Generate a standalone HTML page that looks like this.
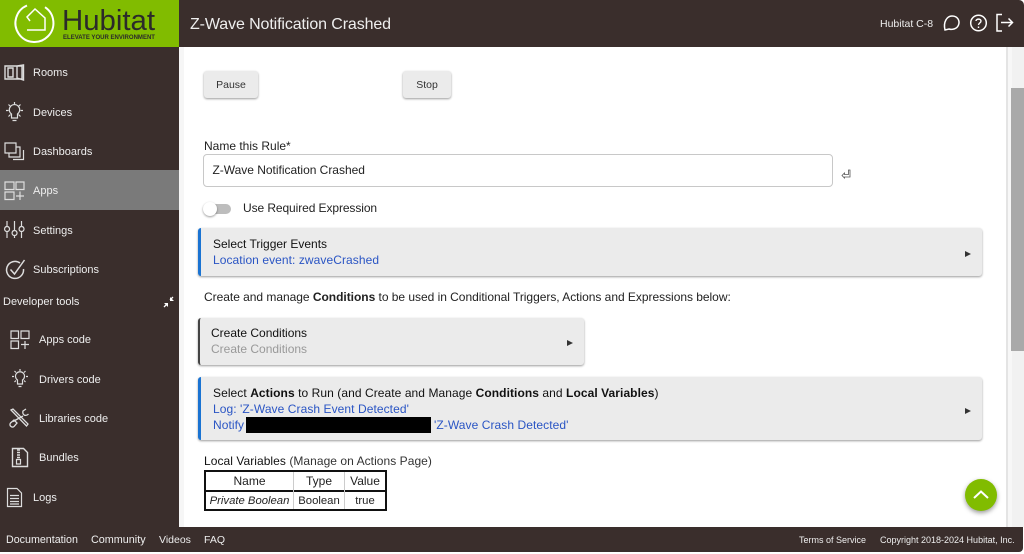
<!DOCTYPE html>
<html><head><meta charset="utf-8">
<style>
html,body{margin:0;padding:0;background:#fff}
body{width:1024px;height:554px;overflow:hidden;position:relative;font-family:"Liberation Sans",sans-serif;color:#222}
.a{position:absolute;white-space:nowrap}
.nav{position:absolute;color:#eee;font-size:11px;white-space:nowrap;line-height:14px}
.card{position:absolute;background:#ebebeb;border-radius:3px;box-shadow:0 1px 2px rgba(0,0,0,.4);box-sizing:border-box}
.t{position:absolute;font-size:12px;white-space:nowrap;line-height:16px}
.blue{color:#2a55c4;letter-spacing:.07px}
.btn{position:absolute;background:#ebebeb;border-radius:3px;box-shadow:0 1px 2px rgba(0,0,0,.4);font-size:10.5px;color:#333;text-align:center;top:71px;height:27px;line-height:29px}
.ar{position:absolute;width:0;height:0;border-left:6px solid #333;border-top:3px solid transparent;border-bottom:3px solid transparent}
svg{position:absolute;overflow:visible}
.i{fill:none;stroke:#ddd;stroke-width:1.2}
</style></head><body>
<!-- left and right gutters -->
<div class="a" style="left:179px;top:47px;width:5px;height:480px;background:#f6f6f6"></div>
<div class="a" style="left:1006px;top:47px;width:2px;height:480px;background:#e4e4e4"></div>
<div class="a" style="left:1008px;top:47px;width:4px;height:480px;background:#f7f7f7"></div>
<div class="a" style="left:1012px;top:47px;width:12px;height:480px;background:#f1f1f1"></div>
<div class="a" style="left:1011px;top:88px;width:13px;height:263px;background:#a9a9a9"></div>
<!-- header -->
<div class="a" style="left:0;top:0;width:1024px;height:47px;background:#3a2e2c;border-top-right-radius:5px"></div>
<div class="a" style="left:0;top:0;width:179px;height:47px;background:#81bc00"></div>
<svg style="left:0;top:0" width="179" height="47">
<path d="M27 5.500A19 19 0 1 0 45 7.200" fill="none" stroke="#fff" stroke-width="2"/>
<path d="M30 21L27 17L35 9L45 18V30H27" fill="none" stroke="#fff" stroke-width="1.500"/>
<text x="62" y="30" font-family="Liberation Sans" font-size="29" fill="#2b2a2a" textLength="93" lengthAdjust="spacingAndGlyphs">Hubitat</text>
<text x="63" y="39" font-family="Liberation Sans" font-size="6.500" font-weight="bold" fill="#2b2a2a" textLength="92" lengthAdjust="spacingAndGlyphs">ELEVATE YOUR ENVIRONMENT</text>
</svg>
<div class="a" style="left:190px;top:15px;font-size:16px;line-height:20px;color:#eee;letter-spacing:-.11px">Z-Wave Notification Crashed</div>
<div class="a" style="left:880px;top:17px;font-size:10.500px;line-height:14px;color:#eee">Hubitat C-8</div>
<svg style="left:940px;top:10px" width="84" height="30" fill="none" stroke="#fff" stroke-width="1.500">
<path d="M5 20C3 12 7 6 12 6C18 6 20 11 18.500 15C17 19 12 20 9 19L5 20Z"/>
<circle cx="38.500" cy="13" r="7.800"/>
<path d="M36 11C36 8.500 41 8.500 41 11C41 13 38.500 13 38.500 15M38.500 16.500V18" stroke-width="1.400"/>
<path d="M62 4.500H57V21H62M61 12.500H72.500M68.500 8.500L72.500 12.500L68.500 16.500"/>
</svg>
<!-- sidebar -->
<div class="a" style="left:0;top:47px;width:179px;height:480px;background:#3a2e2c"></div>
<div class="a" style="left:0;top:170px;width:179px;height:40px;background:#7a7a7a"></div>
<svg style="left:0;top:0" width="180" height="527">
<g class="i">
<!-- rooms -->
<path d="M5 66H22V79H5ZM8 68H13V77H8ZM17 66L23.500 65V80L17 78Z" stroke-width="1.400"/>
<!-- devices -->
<path d="M11.500 114A5.200 5.200 0 1 1 17.500 114V118H11.500ZM12.500 120.500H16.500M14.500 102V104.500M6 110.500H8.500M20.500 110.500H23M8.500 104.500L10.500 106.500M20.500 104.500L18.500 106.500M8.500 116.500L10.500 114.500M20.500 116.500L18.500 114.500"/>
<!-- dashboards -->
<path d="M5 143H16V153H5ZM16 147H20V157H9V153M23.500 150V159.500H13"/>
<!-- apps -->
<path d="M5 182H14V189.500H5ZM16 182H24V189.500H16ZM5 192H14V199.500H5ZM16 196H24M20 191.500V200"/>
<!-- settings -->
<path d="M7 221V226.500M7 231.500V238M14.500 221V230.500M14.500 235.500V238M21.500 221V226.500M21.500 231.500V238M7 226.500A2.500 2.500 0 1 0 7.100 226.500M14.500 230.500A2.500 2.500 0 1 0 14.600 230.500M21.500 226.500A2.500 2.500 0 1 0 21.600 226.500"/>
<!-- subscriptions -->
<path d="M20 263A8.500 8.500 0 1 0 23.500 269M10.500 269.500L14.500 274L24.500 260" stroke-width="1.500"/>
<!-- apps code -->
<path d="M11 331H18.500V338.500H11ZM21 331H29V338.500H21ZM11 341H18.500V348.500H11ZM21 344.500H29M25 341V349"/>
<!-- drivers code -->
<path d="M17.500 380A4.500 4.500 0 1 1 22.500 380V384H17.500ZM18.500 386.500H21.500M20 369V371M12 376.500H14M26 376.500H28M14.500 371L16 372.500M25.500 371L24 372.500M14.500 382L16 380.500M25.500 382L24 380.500"/>
<!-- libraries -->
<path d="M11 410L13 409L28 424L26.500 426ZM23 416L13 421.500M24 415A4 4 0 0 1 23 411L26 409M24 415A4 4 0 0 0 28.500 414M14 420L17 423L14 426.500A2.500 2.500 0 0 1 10.500 423Z" stroke-width="1.300"/>
<!-- bundles -->
<path d="M12.500 448.500H23.500L27.500 452.500V466.500H12.500Z" stroke-width="1.400"/>
<path d="M17 450H20M17 452.500H20M17 455H20M17 457.500H20" stroke-width="1.500"/>
<path d="M16.500 459.500H20.500V464H16.500Z"/>
<!-- logs -->
<path d="M7.500 488.500H17L21.500 493V506.500H7.500ZM10 495.500H19M10 498.500H19M10 501.500H19M10 504H19"/>
</g></svg>
<div class="nav" style="left:33px;top:66px">Rooms</div>
<div class="nav" style="left:33px;top:106px">Devices</div>
<div class="nav" style="left:33px;top:145px">Dashboards</div>
<div class="nav" style="left:33px;top:184px">Apps</div>
<div class="nav" style="left:33px;top:224px">Settings</div>
<div class="nav" style="left:33px;top:263px">Subscriptions</div>
<div class="nav" style="left:3px;top:295px">Developer tools</div>
<svg style="left:163px;top:296px" width="12" height="12" fill="none" stroke="#fff" stroke-width="1.300"><path d="M1 11L4.500 7.500M10 1L7 4"/><path d="M1 7H5V11Z M7 1V5H11Z" fill="#fff" stroke="none"/></svg>
<div class="nav" style="left:39px;top:333px">Apps code</div>
<div class="nav" style="left:39px;top:373px">Drivers code</div>
<div class="nav" style="left:39px;top:412px">Libraries code</div>
<div class="nav" style="left:39px;top:451px">Bundles</div>
<div class="nav" style="left:33px;top:491px">Logs</div>
<!-- content -->
<div class="btn" style="left:204px;width:54px">Pause</div>
<div class="btn" style="left:403px;width:48px">Stop</div>
<div class="t" style="left:204px;top:138px">Name this Rule*</div>
<div class="a" style="left:203px;top:154px;width:630px;height:33px;box-sizing:border-box;border:1px solid #c8c8c8;border-radius:4px;font-size:12px;line-height:30px;padding-left:8.500px;letter-spacing:-.02px">Z-Wave Notification Crashed</div>
<svg style="left:841px;top:169px" width="10" height="10" fill="none" stroke="#555" stroke-width=".8"><path d="M1 6.500L3.500 4V5.500H7.500V1H9V8H3.500V9Z"/></svg>
<div class="a" style="left:204px;top:204px;width:27px;height:10px;border-radius:5px;background:#bdbdbd"></div>
<div class="a" style="left:203px;top:202px;width:14px;height:14px;border-radius:50%;background:#fff;box-shadow:0 1px 2px rgba(0,0,0,.4)"></div>
<div class="t" style="left:243px;top:200px;letter-spacing:-.09px">Use Required Expression</div>

<div class="card" style="left:198px;top:228px;width:784px;height:48px;border-left:3px solid #1a73d2"></div>
<div class="t" style="left:213px;top:236px;color:#111">Select Trigger Events</div>
<div class="t blue" style="left:213px;top:252px">Location event: zwaveCrashed</div>
<div class="ar" style="left:965px;top:251px"></div>

<div class="t" style="left:204px;top:289px;letter-spacing:-.03px">Create and manage <b>Conditions</b> to be used in Conditional Triggers, Actions and Expressions below:</div>

<div class="card" style="left:198px;top:318px;width:386px;height:47px;border-left:2px solid #444"></div>
<div class="t" style="left:211px;top:325px;color:#111">Create Conditions</div>
<div class="t" style="left:211px;top:341px;color:#999">Create Conditions</div>
<div class="ar" style="left:567px;top:340px"></div>

<div class="card" style="left:198px;top:377px;width:784px;height:63px;border-left:3px solid #1a73d2"></div>
<div class="t" style="left:213px;top:385px;color:#111;letter-spacing:.07px">Select <b>Actions</b> to Run (and Create and Manage <b>Conditions</b> and <b>Local Variables</b>)</div>
<div class="t blue" style="left:213px;top:401px">Log: 'Z-Wave Crash Event Detected'</div>
<div class="t blue" style="left:213px;top:417px">Notify</div>
<div class="a" style="left:246px;top:417px;width:185px;height:16px;background:#000"></div>
<div class="t blue" style="left:434px;top:417px">'Z-Wave Crash Detected'</div>
<div class="ar" style="left:965px;top:408px"></div>

<div class="t" style="left:204px;top:453px;letter-spacing:.05px"><span style="color:#111">Local Variables</span> <span style="color:#333">(Manage on Actions Page)</span></div>
<div class="a" style="left:204px;top:470px;width:183px;height:41px;box-sizing:border-box;border:2px solid #111"></div>
<div class="a" style="left:204px;top:490px;width:183px;height:2px;background:#111"></div>
<div class="a" style="left:293px;top:472px;width:1px;height:37px;background:#ccc"></div>
<div class="a" style="left:344px;top:472px;width:1px;height:37px;background:#ccc"></div>
<div class="t" style="left:206px;top:473px;width:87px;text-align:center">Name</div>
<div class="t" style="left:294px;top:473px;width:50px;text-align:center">Type</div>
<div class="t" style="left:345px;top:473px;width:40px;text-align:center">Value</div>
<div class="t" style="left:206px;top:493px;width:87px;text-align:center;font-size:11.300px;font-style:italic">Private Boolean</div>
<div class="t" style="left:294px;top:493px;width:50px;text-align:center;font-size:11.300px">Boolean</div>
<div class="t" style="left:345px;top:493px;width:40px;text-align:center;font-size:11.300px">true</div>

<div class="a" style="left:965px;top:479px;width:32px;height:32px;border-radius:50%;background:#81bc00;box-shadow:0 2px 5px rgba(0,0,0,.4)"></div>
<svg style="left:965px;top:479px" width="32" height="32" fill="none" stroke="#fff" stroke-width="2"><path d="M9 19L16 12.500L23 19"/></svg>
<!-- footer -->
<div class="a" style="left:0;top:527px;width:1023px;height:25px;background:#3a2e2c;border-bottom-right-radius:4px"></div>
<div class="nav" style="left:6px;top:533px;font-size:10.700px">Documentation</div>
<div class="nav" style="left:91px;top:533px;font-size:10.800px">Community</div>
<div class="nav" style="left:159px;top:533px;font-size:10.500px">Videos</div>
<div class="nav" style="left:204px;top:533px;font-size:10.500px">FAQ</div>
<div class="nav" style="left:799px;top:533px;font-size:9px">Terms of Service</div>
<div class="nav" style="left:880px;top:533px;font-size:9px">Copyright 2018-2024 Hubitat, Inc.</div>
</body></html>
